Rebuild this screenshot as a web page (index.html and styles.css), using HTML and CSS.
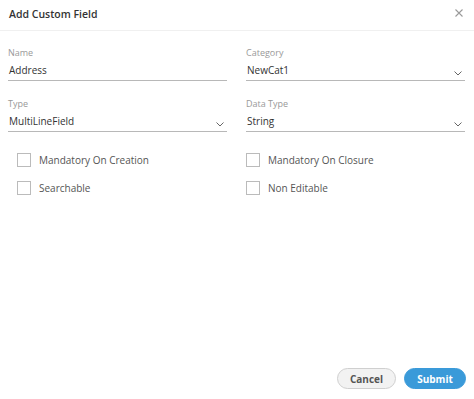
FILE: index.html
```html
<!DOCTYPE HTML>
<html>
	<head>
		<meta charset='utf-8' />
		<title>Add Custom Field</title>
		<link rel="stylesheet" href="styles.css">
	</head>
	<body>
		<div class='dialog'>
			<div class='header'>
				<span class='title'>Add Custom Field</span>
				<a class='close' href='#'>
					<svg width='8' height='8' viewBox='0 0 8 8'><path d='M0.5 0.5L7.5 7.5M7.5 0.5L0.5 7.5' stroke='#9a9a9a' stroke-width='1.1' fill='none'/></svg>
				</a>
			</div>
			<div class='form'>
				<div class='field'>
					<label>Name</label>
					<div class='input'><span>Address</span></div>
				</div>
				<div class='field'>
					<label>Category</label>
					<div class='input'><span>NewCat1</span>
						<svg class='chev' width='8' height='5' viewBox='0 0 8 5'><path d='M0.5 0.5L4 4L7.5 0.5' stroke='#666' stroke-width='1' fill='none'/></svg>
					</div>
				</div>
				<div class='field'>
					<label>Type</label>
					<div class='input'><span>MultiLineField</span>
						<svg class='chev' width='8' height='5' viewBox='0 0 8 5'><path d='M0.5 0.5L4 4L7.5 0.5' stroke='#666' stroke-width='1' fill='none'/></svg>
					</div>
				</div>
				<div class='field'>
					<label>Data Type</label>
					<div class='input'><span>String</span>
						<svg class='chev' width='8' height='5' viewBox='0 0 8 5'><path d='M0.5 0.5L4 4L7.5 0.5' stroke='#666' stroke-width='1' fill='none'/></svg>
					</div>
				</div>
			</div>
			<div class='checks'>
				<div class='col left'>
					<div class='check'><span class='box'></span>Mandatory On Creation</div>
					<div class='check'><span class='box'></span>Searchable</div>
				</div>
				<div class='col'>
					<div class='check'><span class='box'></span>Mandatory On Closure</div>
					<div class='check'><span class='box'></span>Non Editable</div>
				</div>
			</div>
			<div class='footer'>
				<button class='btn cancel'>Cancel</button>
				<button class='btn submit'>Submit</button>
			</div>
		</div>
	</body>
</html>
```
FILE: styles.css
```css
body{margin:0;background:#fff;font-family:"Open Sans","Liberation Sans",sans-serif;}

.dialog{
	display:flex;
	flex-direction:column;
	height:399px;
	box-sizing:border-box;
}
.header{
	display:flex;
	justify-content:space-between;
	align-items:center;
	height:30px;
	padding:0 11px 0 9px;
	border-bottom:1px solid #f0f0f0;
}
.header .title{
	font-size:10.5px;
	font-weight:600;
	color:#333;
	margin-top:-2px;
}
.header .close{
	display:flex;
	margin-top:-5px;
}
.form{
	display:grid;
	grid-template-columns:219px 219px;
	column-gap:19px;
	row-gap:17px;
	padding:16px 9px 0 8px;
}
.field label{
	display:block;
	font-size:9px;
	line-height:12px;
	color:#999;
	margin-bottom:2px;
}
.field .input{
	display:flex;
	justify-content:space-between;
	height:19px;
	border-bottom:1px solid #b8b8b8;
	font-size:10px;
	line-height:18px;
	color:#333;
}
.field .input span{padding-left:1px;}
.field .chev{
	align-self:flex-end;
	margin:0 3px 4px 0;
}
.checks{
	display:grid;
	grid-template-columns:219px 219px;
	column-gap:19px;
	padding:18px 9px 0 8px;
}
.col{
	display:flex;
	flex-direction:column;
	gap:8px;
}
.col.left{padding-left:9px;}
.check{
	display:flex;
	align-items:center;
	height:20px;
	font-size:10px;
	color:#555;
}
.check .box{
	width:12px;
	height:12px;
	border:1px solid #bbb;
	margin-right:8px;
}
.footer{
	display:flex;
	justify-content:flex-end;
	gap:8px;
	margin-top:auto;
	padding:0 8px 10px 0;
}
.btn{
	height:21px;
	border-radius:11px;
	font-family:"Open Sans","Liberation Sans",sans-serif;
	font-size:10px;
	font-weight:700;
	padding:0;
	cursor:pointer;
}
.btn.cancel{
	width:59px;
	background:#f2f2f2;
	border:1px solid #cfcfcf;
	color:#555;
}
.btn.submit{
	width:62px;
	background:#3a9ad9;
	border:1px solid #3a9ad9;
	color:#fff;
}
```
